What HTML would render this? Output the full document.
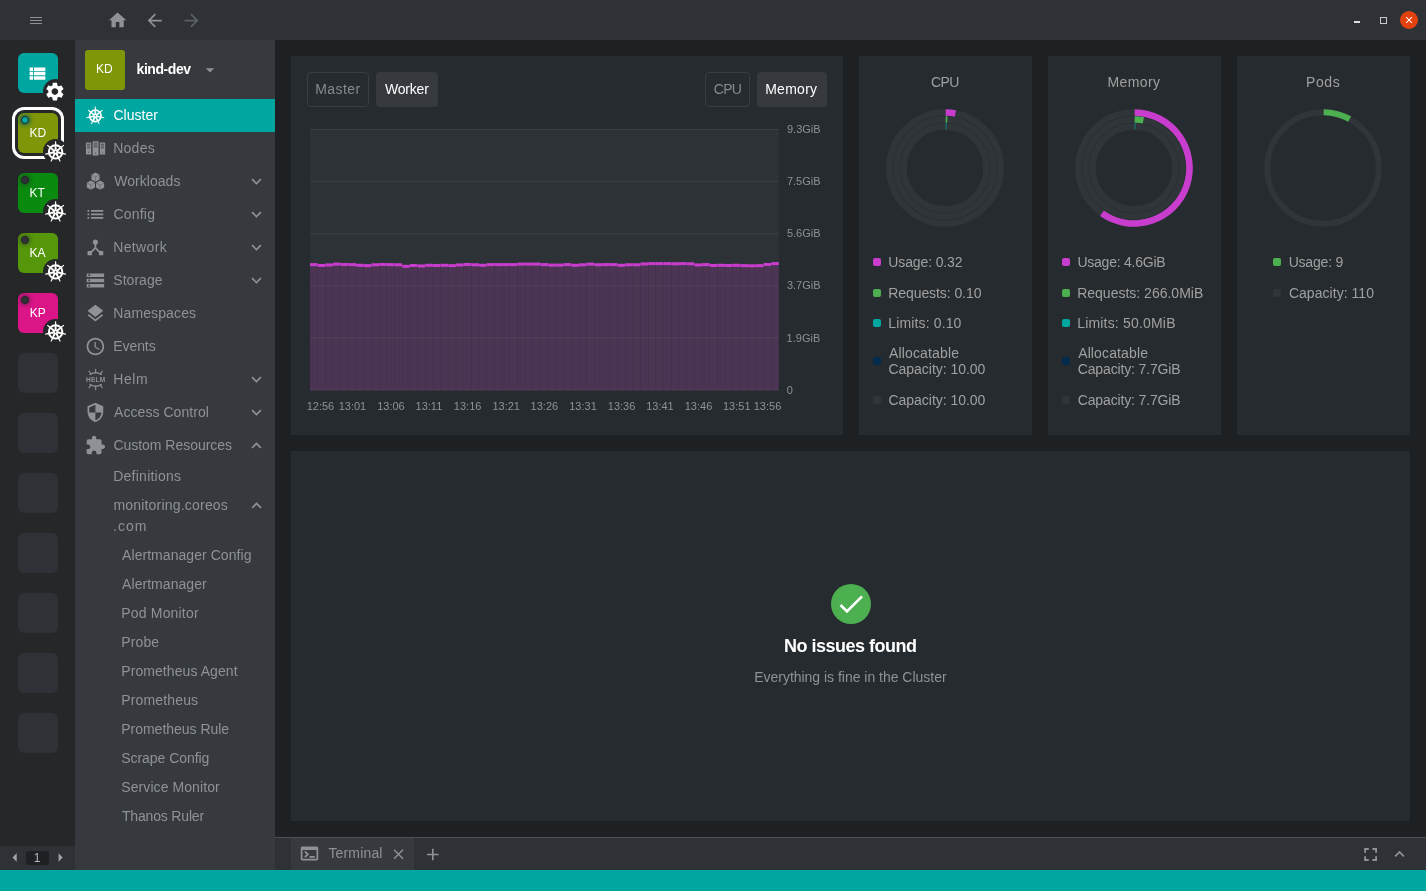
<!DOCTYPE html>
<html lang="en"><head><meta charset="utf-8"><title>Lens</title>
<style>
html,body{margin:0;padding:0;}
body{width:1426px;height:891px;overflow:hidden;background:#1e2124;position:relative;font-family:"Liberation Sans", sans-serif;}
.b{position:absolute;display:block;}
.t{position:absolute;white-space:nowrap;}
#app{position:absolute;left:0;top:0;width:1426px;height:891px;will-change:transform;}
</style></head>
<body>
<div id="app">
<div class="b" style="left:0px;top:0px;width:1426px;height:40px;background:#2e3136;"></div>
<div class="b" style="left:0px;top:40px;width:75px;height:806px;background:#252729;"></div>
<div class="b" style="left:0px;top:846px;width:75px;height:24px;background:#2e3136;"></div>
<div class="b" style="left:75px;top:40px;width:200px;height:830px;background:#36393e;"></div>
<div class="b" style="left:275px;top:40px;width:1151px;height:797px;background:#1e2124;"></div>
<div class="b" style="left:0px;top:870px;width:1426px;height:21px;background:#00a7a0;"></div>
<div class="b" style="left:30px;top:17px;width:12px;height:1px;background:#8e9297;"></div>
<div class="b" style="left:30px;top:20px;width:12px;height:1px;background:#8e9297;"></div>
<div class="b" style="left:30px;top:23px;width:12px;height:1px;background:#8e9297;"></div>
<svg class="b" style="left:107px;top:9px;" width="22" height="22" viewBox="-0.1143 -0.9143 25.1429 25.1429" fill="#8e9297"><path d="M10 20v-6h4v6h5v-8h3L12 3 2 12h3v8z"/></svg>
<svg class="b" style="left:144px;top:10px;" width="22" height="21" viewBox="-0.2286 0.0000 25.1429 24.0000" fill="#8e9297"><path d="M20 11H7.83l5.59-5.59L12 4l-8 8 8 8 1.41-1.41L7.83 13H20v-2z"/></svg>
<svg class="b" style="left:181px;top:10px;" width="21" height="21" viewBox="0.0000 0.0000 24.0000 24.0000" fill="#5b5f64"><path d="M12 4l-1.41 1.41L16.17 11H4v2h12.17l-5.58 5.59L12 20l8-8z"/></svg>
<div class="b" style="left:1354px;top:21.1px;width:6.3px;height:1.8px;background:#e0e0e0;"></div>
<div class="b" style="left:1380px;top:17px;width:7px;height:7px;background:transparent;border:1px solid #c8c8c8;box-sizing:border-box;"></div>
<div class="b" style="left:1400px;top:11px;width:18px;height:18px;background:#e2420f;border-radius:50%;"></div>
<svg class="b" style="left:1403px;top:14px;" width="12" height="12" viewBox="-1.0909 -1.0909 26.1818 26.1818" fill="#ffffff"><path d="M19 6.41L17.59 5 12 10.59 6.41 5 5 6.41 10.59 12 5 17.59 6.41 19 12 13.41 17.59 19 19 17.59 13.41 12z"/></svg>
<div class="b" style="left:18px;top:53px;width:40px;height:40px;background:#00a7a0;border-radius:6px;"></div>
<svg class="b" style="left:27px;top:63px;" width="21" height="22" viewBox="0.0000 -0.1143 24.0000 25.1429" fill="#ffffff"><path d="M3 14h4v-4H3v4zm0 5h4v-4H3v4zM3 9h4V5H3v4zm5 5h13v-4H8v4zm0 5h13v-4H8v4zM8 5v4h13V5H8z"/></svg>
<div class="b" style="left:43.3px;top:79.1px;width:25.2px;height:25.2px;background:#252729;border-radius:50%;"></div>
<svg class="b" style="left:43px;top:80px;" width="23" height="23" viewBox="-0.9818 -0.6545 25.0909 25.0909" fill="#ffffff"><path d="M19.14 12.94c.04-.3.06-.61.06-.94 0-.32-.02-.64-.07-.94l2.03-1.58c.18-.14.23-.41.12-.61l-1.92-3.32c-.12-.22-.37-.29-.59-.22l-2.39.96c-.5-.38-1.03-.7-1.62-.94l-.36-2.54c-.04-.24-.24-.41-.48-.41h-3.84c-.24 0-.43.17-.47.41l-.36 2.54c-.59.24-1.13.57-1.62.94l-2.39-.96c-.22-.08-.47 0-.59.22L2.74 8.87c-.12.21-.08.47.12.61l2.03 1.58c-.05.3-.09.63-.09.94s.02.64.07.94l-2.03 1.58c-.18.14-.23.41-.12.61l1.92 3.32c.12.22.37.29.59.22l2.39-.96c.5.38 1.03.7 1.62.94l.36 2.54c.05.24.24.41.48.41h3.84c.24 0 .44-.17.47-.41l.36-2.54c.59-.24 1.13-.56 1.62-.94l2.39.96c.22.08.47 0 .59-.22l1.92-3.32c.12-.22.07-.47-.12-.61l-2.01-1.58zM12 15.6c-1.98 0-3.6-1.62-3.6-3.6s1.62-3.6 3.6-3.6 3.6 1.62 3.6 3.6-1.62 3.6-3.6 3.6z"/></svg>
<div class="b" style="left:18px;top:113px;width:40px;height:40px;background:#7e9608;border-radius:6px;box-shadow:0 0 0 3px #252729,0 0 0 6px #ffffff;"></div>
<div class="t" style="left:29.55px;top:125.14px;font-size:12px;line-height:16px;color:#ffffff;">KD</div>
<div class="b" style="left:21px;top:116px;width:8px;height:8px;background:#00a7a0;border-radius:50%;box-sizing:border-box;border:1px solid #252729;box-shadow:0 0 5px #252729,0 0 5px #00a7a0;"></div>
<div class="b" style="left:43.3px;top:139.1px;width:25.2px;height:25.2px;background:#252729;border-radius:50%;"></div>
<svg class="b" style="left:43px;top:139px;" width="25" height="25" viewBox="-0.6000 -0.9000 25.0000 25.0000" fill="#ffffff"><circle cx="12" cy="12" r="6.7" fill="none" stroke="#ffffff" stroke-width="2"/><polygon points="13.20,11.50 12.50,1.30 11.50,1.30 10.80,11.50" fill="#ffffff"/><polygon points="13.14,12.63 20.68,5.72 20.05,4.94 11.64,10.75" fill="#ffffff"/><polygon points="12.22,13.28 22.32,14.87 22.54,13.89 12.75,10.94" fill="#ffffff"/><polygon points="11.14,12.97 16.19,21.86 17.09,21.42 13.30,11.93" fill="#ffffff"/><polygon points="10.70,11.93 6.91,21.42 7.81,21.86 12.86,12.97" fill="#ffffff"/><polygon points="11.25,10.94 1.46,13.89 1.68,14.87 11.78,13.28" fill="#ffffff"/><polygon points="12.36,10.75 3.95,4.94 3.32,5.72 10.86,12.63" fill="#ffffff"/><circle cx="12" cy="12" r="2.2" fill="#ffffff"/><circle cx="12" cy="12" r="0.8" fill="#252729"/></svg>
<div class="b" style="left:18px;top:173px;width:40px;height:40px;background:#0b8a10;border-radius:6px;"></div>
<div class="t" style="left:29.62px;top:185.14px;font-size:12px;line-height:16px;color:#ffffff;">KT</div>
<div class="b" style="left:21px;top:176px;width:8px;height:8px;background:#2e3136;border-radius:50%;box-sizing:border-box;border:1px solid #252729;box-shadow:0 0 5px #252729;"></div>
<div class="b" style="left:43.3px;top:199.1px;width:25.2px;height:25.2px;background:#252729;border-radius:50%;"></div>
<svg class="b" style="left:43px;top:199px;" width="25" height="25" viewBox="-0.6000 -0.9000 25.0000 25.0000" fill="#ffffff"><circle cx="12" cy="12" r="6.7" fill="none" stroke="#ffffff" stroke-width="2"/><polygon points="13.20,11.50 12.50,1.30 11.50,1.30 10.80,11.50" fill="#ffffff"/><polygon points="13.14,12.63 20.68,5.72 20.05,4.94 11.64,10.75" fill="#ffffff"/><polygon points="12.22,13.28 22.32,14.87 22.54,13.89 12.75,10.94" fill="#ffffff"/><polygon points="11.14,12.97 16.19,21.86 17.09,21.42 13.30,11.93" fill="#ffffff"/><polygon points="10.70,11.93 6.91,21.42 7.81,21.86 12.86,12.97" fill="#ffffff"/><polygon points="11.25,10.94 1.46,13.89 1.68,14.87 11.78,13.28" fill="#ffffff"/><polygon points="12.36,10.75 3.95,4.94 3.32,5.72 10.86,12.63" fill="#ffffff"/><circle cx="12" cy="12" r="2.2" fill="#ffffff"/><circle cx="12" cy="12" r="0.8" fill="#252729"/></svg>
<div class="b" style="left:18px;top:233px;width:40px;height:40px;background:#56960b;border-radius:6px;"></div>
<div class="t" style="left:29.51px;top:245.14px;font-size:12px;line-height:16px;color:#ffffff;">KA</div>
<div class="b" style="left:21px;top:236px;width:8px;height:8px;background:#2e3136;border-radius:50%;box-sizing:border-box;border:1px solid #252729;box-shadow:0 0 5px #252729;"></div>
<div class="b" style="left:43.3px;top:259.1px;width:25.2px;height:25.2px;background:#252729;border-radius:50%;"></div>
<svg class="b" style="left:43px;top:259px;" width="25" height="25" viewBox="-0.6000 -0.9000 25.0000 25.0000" fill="#ffffff"><circle cx="12" cy="12" r="6.7" fill="none" stroke="#ffffff" stroke-width="2"/><polygon points="13.20,11.50 12.50,1.30 11.50,1.30 10.80,11.50" fill="#ffffff"/><polygon points="13.14,12.63 20.68,5.72 20.05,4.94 11.64,10.75" fill="#ffffff"/><polygon points="12.22,13.28 22.32,14.87 22.54,13.89 12.75,10.94" fill="#ffffff"/><polygon points="11.14,12.97 16.19,21.86 17.09,21.42 13.30,11.93" fill="#ffffff"/><polygon points="10.70,11.93 6.91,21.42 7.81,21.86 12.86,12.97" fill="#ffffff"/><polygon points="11.25,10.94 1.46,13.89 1.68,14.87 11.78,13.28" fill="#ffffff"/><polygon points="12.36,10.75 3.95,4.94 3.32,5.72 10.86,12.63" fill="#ffffff"/><circle cx="12" cy="12" r="2.2" fill="#ffffff"/><circle cx="12" cy="12" r="0.8" fill="#252729"/></svg>
<div class="b" style="left:18px;top:293px;width:40px;height:40px;background:#db1488;border-radius:6px;"></div>
<div class="t" style="left:29.84px;top:305.14px;font-size:12px;line-height:16px;color:#ffffff;">KP</div>
<div class="b" style="left:21px;top:296px;width:8px;height:8px;background:#2e3136;border-radius:50%;box-sizing:border-box;border:1px solid #252729;box-shadow:0 0 5px #252729;"></div>
<div class="b" style="left:43.3px;top:319.1px;width:25.2px;height:25.2px;background:#252729;border-radius:50%;"></div>
<svg class="b" style="left:43px;top:319px;" width="25" height="25" viewBox="-0.6000 -0.9000 25.0000 25.0000" fill="#ffffff"><circle cx="12" cy="12" r="6.7" fill="none" stroke="#ffffff" stroke-width="2"/><polygon points="13.20,11.50 12.50,1.30 11.50,1.30 10.80,11.50" fill="#ffffff"/><polygon points="13.14,12.63 20.68,5.72 20.05,4.94 11.64,10.75" fill="#ffffff"/><polygon points="12.22,13.28 22.32,14.87 22.54,13.89 12.75,10.94" fill="#ffffff"/><polygon points="11.14,12.97 16.19,21.86 17.09,21.42 13.30,11.93" fill="#ffffff"/><polygon points="10.70,11.93 6.91,21.42 7.81,21.86 12.86,12.97" fill="#ffffff"/><polygon points="11.25,10.94 1.46,13.89 1.68,14.87 11.78,13.28" fill="#ffffff"/><polygon points="12.36,10.75 3.95,4.94 3.32,5.72 10.86,12.63" fill="#ffffff"/><circle cx="12" cy="12" r="2.2" fill="#ffffff"/><circle cx="12" cy="12" r="0.8" fill="#252729"/></svg>
<div class="b" style="left:18px;top:353px;width:40px;height:40px;background:#2e3136;border-radius:6px;"></div>
<div class="b" style="left:18px;top:413px;width:40px;height:40px;background:#2e3136;border-radius:6px;"></div>
<div class="b" style="left:18px;top:473px;width:40px;height:40px;background:#2e3136;border-radius:6px;"></div>
<div class="b" style="left:18px;top:533px;width:40px;height:40px;background:#2e3136;border-radius:6px;"></div>
<div class="b" style="left:18px;top:593px;width:40px;height:40px;background:#2e3136;border-radius:6px;"></div>
<div class="b" style="left:18px;top:653px;width:40px;height:40px;background:#2e3136;border-radius:6px;"></div>
<div class="b" style="left:18px;top:713px;width:40px;height:40px;background:#2e3136;border-radius:6px;"></div>
<svg class="b" style="left:5px;top:847px;" width="20" height="21" viewBox="0.0000 -0.6000 24.0000 25.2000" fill="#a0a3a7"><path d="M14 7l-5 5 5 5V7z"/></svg>
<svg class="b" style="left:50px;top:847px;" width="21" height="21" viewBox="-0.2400 -0.6000 25.2000 25.2000" fill="#a0a3a7"><path d="M10 17l5-5-5-5v10z"/></svg>
<div class="b" style="left:26px;top:851px;width:23px;height:14px;background:#1e2124;border-radius:3px;"></div>
<div class="t" style="left:33.74px;top:849.64px;font-size:12px;line-height:16px;color:#b4b7bb;">1</div>
<div class="b" style="left:85px;top:50px;width:40px;height:40px;background:#7e9608;border-radius:3px;"></div>
<div class="t" style="left:96.05px;top:61.14px;font-size:12px;line-height:16px;color:#ffffff;">KD</div>
<div class="t" style="left:136.55px;top:60.35px;font-size:14px;line-height:18px;color:#ffffff;font-weight:bold;letter-spacing:-0.428px;">kind-dev</div>
<svg class="b" style="left:200px;top:60px;" width="20" height="20" viewBox="0.0000 0.0000 24.0000 24.0000" fill="#8e9297"><path d="M7 10l5 5 5-5z"/></svg>
<div class="b" style="left:75px;top:99px;width:200px;height:33px;background:#00a7a0;"></div>
<div class="t" style="left:113.48px;top:106.45px;font-size:14px;line-height:18px;color:#ffffff;letter-spacing:0.030px;">Cluster</div>
<svg class="b" style="left:85px;top:105px;" width="21" height="22" viewBox="0.0000 -0.5825 24.4660 25.6311" fill="#ffffff"><circle cx="12" cy="12" r="6.7" fill="none" stroke="#ffffff" stroke-width="2"/><polygon points="13.20,11.50 12.50,1.30 11.50,1.30 10.80,11.50" fill="#ffffff"/><polygon points="13.14,12.63 20.68,5.72 20.05,4.94 11.64,10.75" fill="#ffffff"/><polygon points="12.22,13.28 22.32,14.87 22.54,13.89 12.75,10.94" fill="#ffffff"/><polygon points="11.14,12.97 16.19,21.86 17.09,21.42 13.30,11.93" fill="#ffffff"/><polygon points="10.70,11.93 6.91,21.42 7.81,21.86 12.86,12.97" fill="#ffffff"/><polygon points="11.25,10.94 1.46,13.89 1.68,14.87 11.78,13.28" fill="#ffffff"/><polygon points="12.36,10.75 3.95,4.94 3.32,5.72 10.86,12.63" fill="#ffffff"/><circle cx="12" cy="12" r="2.2" fill="#ffffff"/><circle cx="12" cy="12" r="0.8" fill="#00a7a0"/></svg>
<div class="t" style="left:113.26px;top:139.45px;font-size:14px;line-height:18px;color:#8e9297;letter-spacing:0.236px;">Nodes</div>
<svg class="b" style="left:84px;top:137px;" width="23" height="23" viewBox="-0.7222 -0.7778 25.5556 25.5556" fill="#8e9297"><rect x="1.4" y="5.2" width="5.9" height="13.6" rx="0.6" fill="#8e9297"/><rect x="2.5999999999999996" y="6.800000000000001" width="3.5000000000000004" height="0.9" fill="#36393e"/><rect x="2.5999999999999996" y="8.9" width="3.5000000000000004" height="0.9" fill="#36393e"/><rect x="2.5999999999999996" y="11.0" width="3.5000000000000004" height="0.9" fill="#36393e"/><rect x="3.8499999999999996" y="15.600000000000001" width="1" height="1" fill="#36393e"/><rect x="8.85" y="3.95" width="6.6" height="15.85" rx="0.6" fill="#8e9297"/><rect x="10.049999999999999" y="5.550000000000001" width="4.199999999999999" height="0.9" fill="#36393e"/><rect x="10.049999999999999" y="7.65" width="4.199999999999999" height="0.9" fill="#36393e"/><rect x="10.049999999999999" y="9.75" width="4.199999999999999" height="0.9" fill="#36393e"/><rect x="11.649999999999999" y="16.6" width="1" height="1" fill="#36393e"/><rect x="16.9" y="5.2" width="5.9" height="13.6" rx="0.6" fill="#8e9297"/><rect x="18.099999999999998" y="6.800000000000001" width="3.5000000000000004" height="0.9" fill="#36393e"/><rect x="18.099999999999998" y="8.9" width="3.5000000000000004" height="0.9" fill="#36393e"/><rect x="18.099999999999998" y="11.0" width="3.5000000000000004" height="0.9" fill="#36393e"/><rect x="19.349999999999998" y="15.600000000000001" width="1" height="1" fill="#36393e"/></svg>
<div class="t" style="left:114.19px;top:172.45px;font-size:14px;line-height:18px;color:#8e9297;letter-spacing:0.043px;">Workloads</div>
<svg class="b" style="left:84px;top:170px;" width="23" height="23" viewBox="-0.7778 -0.5556 25.5556 25.5556" fill="#8e9297"><polygon points="12.00,2.10 16.50,4.70 16.50,9.90 12.00,12.50 7.50,9.90 7.50,4.70" fill="#8e9297"/><path d="M7.50 4.70L12.00 7.30L16.50 4.70M12.00 7.30V12.50" stroke="#36393e" stroke-width="0.7" fill="none" opacity="0.55"/><polygon points="6.90,11.00 11.40,13.60 11.40,18.80 6.90,21.40 2.40,18.80 2.40,13.60" fill="#8e9297"/><path d="M2.40 13.60L6.90 16.20L11.40 13.60M6.90 16.20V21.40" stroke="#36393e" stroke-width="0.7" fill="none" opacity="0.55"/><polygon points="17.10,11.00 21.60,13.60 21.60,18.80 17.10,21.40 12.60,18.80 12.60,13.60" fill="#8e9297"/><path d="M12.60 13.60L17.10 16.20L21.60 13.60M17.10 16.20V21.40" stroke="#36393e" stroke-width="0.7" fill="none" opacity="0.55"/></svg>
<svg class="b" style="left:246px;top:171px;" width="21" height="21" viewBox="-0.5400 -0.5400 25.2000 25.2000" fill="#8e9297"><path d="M7.41 8.59L12 13.17l4.59-4.58L18 10l-6 6-6-6 1.41-1.41z"/></svg>
<div class="t" style="left:113.48px;top:205.45px;font-size:14px;line-height:18px;color:#8e9297;letter-spacing:0.200px;">Config</div>
<svg class="b" style="left:84px;top:203px;" width="22" height="22" viewBox="-1.0286 -1.0857 25.1429 25.1429" fill="#8e9297"><path d="M3 13h2v-2H3v2zm0 4h2v-2H3v2zm0-8h2V7H3v2zm4 4h14v-2H7v2zm0 4h14v-2H7v2zM7 7v2h14V7H7z"/></svg>
<svg class="b" style="left:246px;top:204px;" width="21" height="21" viewBox="-0.5400 -0.5400 25.2000 25.2000" fill="#8e9297"><path d="M7.41 8.59L12 13.17l4.59-4.58L18 10l-6 6-6-6 1.41-1.41z"/></svg>
<div class="t" style="left:113.26px;top:238.45px;font-size:14px;line-height:18px;color:#8e9297;letter-spacing:0.343px;">Network</div>
<svg class="b" style="left:84px;top:236px;" width="22" height="22" viewBox="-1.0286 -1.0857 25.1429 25.1429" fill="#8e9297"><path d="M17 16l-4-4V8.82C14.16 8.4 15 7.3 15 6c0-1.66-1.34-3-3-3S9 4.34 9 6c0 1.3.84 2.4 2 2.82V12l-4 4H3v5h5v-3.05l4-4.2 4 4.2V21h5v-5h-4z"/></svg>
<svg class="b" style="left:246px;top:237px;" width="21" height="21" viewBox="-0.5400 -0.5400 25.2000 25.2000" fill="#8e9297"><path d="M7.41 8.59L12 13.17l4.59-4.58L18 10l-6 6-6-6 1.41-1.41z"/></svg>
<div class="t" style="left:113.31px;top:271.45px;font-size:14px;line-height:18px;color:#8e9297;letter-spacing:0.033px;">Storage</div>
<svg class="b" style="left:84px;top:269px;" width="22" height="22" viewBox="-1.0286 -1.0857 25.1429 25.1429" fill="#8e9297"><path d="M2 20h20v-4H2v4zm2-3h2v2H4v-2zM2 4v4h20V4H2zm4 3H4V5h2v2zm-4 7h20v-4H2v4zm2-3h2v2H4v-2z"/></svg>
<svg class="b" style="left:246px;top:270px;" width="21" height="21" viewBox="-0.5400 -0.5400 25.2000 25.2000" fill="#8e9297"><path d="M7.41 8.59L12 13.17l4.59-4.58L18 10l-6 6-6-6 1.41-1.41z"/></svg>
<div class="t" style="left:113.26px;top:304.45px;font-size:14px;line-height:18px;color:#8e9297;letter-spacing:0.120px;">Namespaces</div>
<svg class="b" style="left:84px;top:302px;" width="22" height="22" viewBox="-1.0286 -1.0857 25.1429 25.1429" fill="#8e9297"><path d="M11.99 18.54l-7.37-5.73L3 14.07l9 7 9-7-1.63-1.27-7.38 5.74zM12 16l7.36-5.73L21 9l-9-7-9 7 1.63 1.27L12 16z"/></svg>
<div class="t" style="left:113.26px;top:337.45px;font-size:14px;line-height:18px;color:#8e9297;letter-spacing:-0.078px;">Events</div>
<svg class="b" style="left:84px;top:335px;" width="22" height="22" viewBox="-1.0286 -1.0857 25.1429 25.1429" fill="#8e9297"><path d="M11.99 2C6.47 2 2 6.48 2 12s4.47 10 9.99 10C17.52 22 22 17.52 22 12S17.52 2 11.99 2zM12 20c-4.42 0-8-3.58-8-8s3.58-8 8-8 8 3.58 8 8-3.58 8-8 8zm.5-13H11v6l5.25 3.15.75-1.23-4.5-2.67z"/></svg>
<div class="t" style="left:113.26px;top:370.45px;font-size:14px;line-height:18px;color:#8e9297;letter-spacing:0.609px;">Helm</div>
<svg class="b" style="left:83px;top:367px;" width="25" height="25" viewBox="-12.6500 -12.4500 25.0000 25.0000" fill="#8e9297"><path d="M-5.7 -5.0Q0 -8.5 5.7 -5.0" fill="none" stroke="#8e9297" stroke-width="1.15" stroke-linecap="round"/><path d="M0 -10.2V-6.6M-6.6 -8.3L-4.7 -5.4M6.6 -8.3L4.7 -5.4" fill="none" stroke="#8e9297" stroke-width="1.15" stroke-linecap="round"/><path d="M-5.7 5.0Q0 8.5 5.7 5.0" fill="none" stroke="#8e9297" stroke-width="1.15" stroke-linecap="round"/><path d="M0 10.2V6.6M-6.6 8.3L-4.7 5.4M6.6 8.3L4.7 5.4" fill="none" stroke="#8e9297" stroke-width="1.15" stroke-linecap="round"/><text x="0" y="2.35" text-anchor="middle" font-family="Liberation Sans, sans-serif" font-weight="bold" font-size="6.5" textLength="19.2" lengthAdjust="spacing" fill="#8e9297">HELM</text></svg>
<svg class="b" style="left:246px;top:369px;" width="21" height="21" viewBox="-0.5400 -0.5400 25.2000 25.2000" fill="#8e9297"><path d="M7.41 8.59L12 13.17l4.59-4.58L18 10l-6 6-6-6 1.41-1.41z"/></svg>
<div class="t" style="left:114.08px;top:403.45px;font-size:14px;line-height:18px;color:#8e9297;letter-spacing:0.052px;">Access Control</div>
<svg class="b" style="left:84px;top:401px;" width="22" height="22" viewBox="-1.0286 -1.0857 25.1429 25.1429" fill="#8e9297"><path d="M12 1L3 5v6c0 5.55 3.84 10.74 9 12 5.16-1.26 9-6.45 9-12V5l-9-4zm0 10.99h7c-.53 4.12-3.28 7.79-7 8.94V12H5V6.3l7-3.11v8.8z"/></svg>
<svg class="b" style="left:246px;top:402px;" width="21" height="21" viewBox="-0.5400 -0.5400 25.2000 25.2000" fill="#8e9297"><path d="M7.41 8.59L12 13.17l4.59-4.58L18 10l-6 6-6-6 1.41-1.41z"/></svg>
<div class="t" style="left:113.48px;top:436.45px;font-size:14px;line-height:18px;color:#8e9297;letter-spacing:-0.034px;">Custom Resources</div>
<svg class="b" style="left:84px;top:434px;" width="22" height="22" viewBox="-1.0286 -1.0857 25.1429 25.1429" fill="#8e9297"><path d="M20.5 11H19V7c0-1.1-.9-2-2-2h-4V3.5C13 2.12 11.88 1 10.5 1S8 2.12 8 3.5V5H4c-1.1 0-1.99.9-1.99 2v3.8H3.5c1.49 0 2.7 1.21 2.7 2.7s-1.21 2.7-2.7 2.7H2V20c0 1.1.9 2 2 2h3.8v-1.5c0-1.49 1.21-2.7 2.7-2.7 1.49 0 2.7 1.21 2.7 2.7V22H17c1.1 0 2-.9 2-2v-4h1.5c1.38 0 2.5-1.12 2.5-2.5S21.88 11 20.5 11z"/></svg>
<svg class="b" style="left:246px;top:435px;" width="21" height="21" viewBox="-0.5400 -0.7800 25.2000 25.2000" fill="#8e9297"><path d="M7.41 15.41L12 10.83l4.59 4.58L18 14l-6-6-6 6z"/></svg>
<div class="t" style="left:113.26px;top:467.15px;font-size:14px;line-height:18px;color:#8e9297;letter-spacing:0.239px;">Definitions</div>
<div class="t" style="left:113.38px;top:496.05px;font-size:14px;line-height:18px;color:#8e9297;letter-spacing:0.200px;">monitoring.coreos</div>
<div class="t" style="left:112.99px;top:516.95px;font-size:14px;line-height:18px;color:#8e9297;letter-spacing:1.039px;">.com</div>
<svg class="b" style="left:246px;top:495px;" width="21" height="21" viewBox="-0.7200 -0.7200 25.2000 25.2000" fill="#8e9297"><path d="M7.41 15.41L12 10.83l4.59 4.58L18 14l-6-6-6 6z"/></svg>
<div class="t" style="left:122.08px;top:546.15px;font-size:14px;line-height:18px;color:#8e9297;letter-spacing:0.052px;">Alertmanager Config</div>
<div class="t" style="left:122.08px;top:575.15px;font-size:14px;line-height:18px;color:#8e9297;letter-spacing:0.050px;">Alertmanager</div>
<div class="t" style="left:121.26px;top:604.15px;font-size:14px;line-height:18px;color:#8e9297;letter-spacing:0.185px;">Pod Monitor</div>
<div class="t" style="left:121.26px;top:633.15px;font-size:14px;line-height:18px;color:#8e9297;letter-spacing:0.118px;">Probe</div>
<div class="t" style="left:121.26px;top:662.15px;font-size:14px;line-height:18px;color:#8e9297;letter-spacing:0.077px;">Prometheus Agent</div>
<div class="t" style="left:121.26px;top:691.15px;font-size:14px;line-height:18px;color:#8e9297;letter-spacing:0.148px;">Prometheus</div>
<div class="t" style="left:121.26px;top:720.15px;font-size:14px;line-height:18px;color:#8e9297;letter-spacing:-0.020px;">Prometheus Rule</div>
<div class="t" style="left:121.31px;top:749.15px;font-size:14px;line-height:18px;color:#8e9297;letter-spacing:-0.058px;">Scrape Config</div>
<div class="t" style="left:121.31px;top:778.15px;font-size:14px;line-height:18px;color:#8e9297;letter-spacing:0.079px;">Service Monitor</div>
<div class="t" style="left:121.95px;top:807.15px;font-size:14px;line-height:18px;color:#8e9297;letter-spacing:-0.167px;">Thanos Ruler</div>
<div class="b" style="left:291px;top:56px;width:552px;height:379px;background:#262b2f;"></div>
<div class="b" style="left:859px;top:56px;width:173px;height:379px;background:#262b2f;"></div>
<div class="b" style="left:1048px;top:56px;width:173px;height:379px;background:#262b2f;"></div>
<div class="b" style="left:1237px;top:56px;width:173px;height:379px;background:#262b2f;"></div>
<div class="b" style="left:291px;top:451px;width:1119px;height:370px;background:#262b2f;"></div>
<div class="b" style="left:307px;top:72px;width:62px;height:35px;background:transparent;border-radius:4px;border:1px solid #3a3d42;box-sizing:border-box;"></div>
<div class="t" style="left:315.30px;top:80.45px;font-size:14px;line-height:18px;color:#87898d;letter-spacing:0.400px;">Master</div>
<div class="b" style="left:376px;top:72px;width:62px;height:35px;background:#36393e;border-radius:4px;"></div>
<div class="t" style="left:384.96px;top:80.45px;font-size:14px;line-height:18px;color:#ffffff;letter-spacing:-0.194px;">Worker</div>
<div class="b" style="left:705px;top:72px;width:45px;height:35px;background:transparent;border-radius:4px;border:1px solid #3a3d42;box-sizing:border-box;"></div>
<div class="t" style="left:713.77px;top:80.45px;font-size:14px;line-height:18px;color:#87898d;letter-spacing:-0.727px;">CPU</div>
<div class="b" style="left:757px;top:72px;width:70px;height:35px;background:#36393e;border-radius:4px;"></div>
<div class="t" style="left:765.20px;top:80.45px;font-size:14px;line-height:18px;color:#ffffff;letter-spacing:0.273px;">Memory</div>
<svg class="b" style="left:310px;top:128px" width="469" height="263.4" viewBox="310 128 469 263.4"><rect x="310" y="129" width="469" height="261.4" fill="#2d3236"/><rect x="310.00" y="263.13" width="7.52" height="127.27" fill="#c93dce" fill-opacity="0.2"/><rect x="310.00" y="263.13" width="7.52" height="3" fill="#c93dce"/><rect x="317.69" y="263.97" width="7.52" height="126.43" fill="#c93dce" fill-opacity="0.2"/><rect x="317.69" y="263.97" width="7.52" height="3" fill="#c93dce"/><rect x="325.38" y="263.47" width="7.52" height="126.93" fill="#c93dce" fill-opacity="0.2"/><rect x="325.38" y="263.47" width="7.52" height="3" fill="#c93dce"/><rect x="333.07" y="262.63" width="7.52" height="127.77" fill="#c93dce" fill-opacity="0.2"/><rect x="333.07" y="262.63" width="7.52" height="3" fill="#c93dce"/><rect x="340.75" y="262.96" width="7.52" height="127.44" fill="#c93dce" fill-opacity="0.2"/><rect x="340.75" y="262.96" width="7.52" height="3" fill="#c93dce"/><rect x="348.44" y="263.13" width="7.52" height="127.27" fill="#c93dce" fill-opacity="0.2"/><rect x="348.44" y="263.13" width="7.52" height="3" fill="#c93dce"/><rect x="356.13" y="263.80" width="7.52" height="126.60" fill="#c93dce" fill-opacity="0.2"/><rect x="356.13" y="263.80" width="7.52" height="3" fill="#c93dce"/><rect x="363.82" y="264.14" width="7.52" height="126.26" fill="#c93dce" fill-opacity="0.2"/><rect x="363.82" y="264.14" width="7.52" height="3" fill="#c93dce"/><rect x="371.51" y="263.30" width="7.52" height="127.10" fill="#c93dce" fill-opacity="0.2"/><rect x="371.51" y="263.30" width="7.52" height="3" fill="#c93dce"/><rect x="379.20" y="262.96" width="7.52" height="127.44" fill="#c93dce" fill-opacity="0.2"/><rect x="379.20" y="262.96" width="7.52" height="3" fill="#c93dce"/><rect x="386.89" y="263.13" width="7.52" height="127.27" fill="#c93dce" fill-opacity="0.2"/><rect x="386.89" y="263.13" width="7.52" height="3" fill="#c93dce"/><rect x="394.57" y="263.30" width="7.52" height="127.10" fill="#c93dce" fill-opacity="0.2"/><rect x="394.57" y="263.30" width="7.52" height="3" fill="#c93dce"/><rect x="402.26" y="264.81" width="7.52" height="125.59" fill="#c93dce" fill-opacity="0.2"/><rect x="402.26" y="264.81" width="7.52" height="3" fill="#c93dce"/><rect x="409.95" y="263.97" width="7.52" height="126.43" fill="#c93dce" fill-opacity="0.2"/><rect x="409.95" y="263.97" width="7.52" height="3" fill="#c93dce"/><rect x="417.64" y="264.48" width="7.52" height="125.92" fill="#c93dce" fill-opacity="0.2"/><rect x="417.64" y="264.48" width="7.52" height="3" fill="#c93dce"/><rect x="425.33" y="263.80" width="7.52" height="126.60" fill="#c93dce" fill-opacity="0.2"/><rect x="425.33" y="263.80" width="7.52" height="3" fill="#c93dce"/><rect x="433.02" y="263.97" width="7.52" height="126.43" fill="#c93dce" fill-opacity="0.2"/><rect x="433.02" y="263.97" width="7.52" height="3" fill="#c93dce"/><rect x="440.70" y="263.80" width="7.52" height="126.60" fill="#c93dce" fill-opacity="0.2"/><rect x="440.70" y="263.80" width="7.52" height="3" fill="#c93dce"/><rect x="448.39" y="264.14" width="7.52" height="126.26" fill="#c93dce" fill-opacity="0.2"/><rect x="448.39" y="264.14" width="7.52" height="3" fill="#c93dce"/><rect x="456.08" y="263.47" width="7.52" height="126.93" fill="#c93dce" fill-opacity="0.2"/><rect x="456.08" y="263.47" width="7.52" height="3" fill="#c93dce"/><rect x="463.77" y="262.96" width="7.52" height="127.44" fill="#c93dce" fill-opacity="0.2"/><rect x="463.77" y="262.96" width="7.52" height="3" fill="#c93dce"/><rect x="471.46" y="263.30" width="7.52" height="127.10" fill="#c93dce" fill-opacity="0.2"/><rect x="471.46" y="263.30" width="7.52" height="3" fill="#c93dce"/><rect x="479.15" y="263.80" width="7.52" height="126.60" fill="#c93dce" fill-opacity="0.2"/><rect x="479.15" y="263.80" width="7.52" height="3" fill="#c93dce"/><rect x="486.84" y="263.13" width="7.52" height="127.27" fill="#c93dce" fill-opacity="0.2"/><rect x="486.84" y="263.13" width="7.52" height="3" fill="#c93dce"/><rect x="494.52" y="263.13" width="7.52" height="127.27" fill="#c93dce" fill-opacity="0.2"/><rect x="494.52" y="263.13" width="7.52" height="3" fill="#c93dce"/><rect x="502.21" y="263.13" width="7.52" height="127.27" fill="#c93dce" fill-opacity="0.2"/><rect x="502.21" y="263.13" width="7.52" height="3" fill="#c93dce"/><rect x="509.90" y="263.13" width="7.52" height="127.27" fill="#c93dce" fill-opacity="0.2"/><rect x="509.90" y="263.13" width="7.52" height="3" fill="#c93dce"/><rect x="517.59" y="262.63" width="7.52" height="127.77" fill="#c93dce" fill-opacity="0.2"/><rect x="517.59" y="262.63" width="7.52" height="3" fill="#c93dce"/><rect x="525.28" y="262.63" width="7.52" height="127.77" fill="#c93dce" fill-opacity="0.2"/><rect x="525.28" y="262.63" width="7.52" height="3" fill="#c93dce"/><rect x="532.97" y="262.63" width="7.52" height="127.77" fill="#c93dce" fill-opacity="0.2"/><rect x="532.97" y="262.63" width="7.52" height="3" fill="#c93dce"/><rect x="540.66" y="263.13" width="7.52" height="127.27" fill="#c93dce" fill-opacity="0.2"/><rect x="540.66" y="263.13" width="7.52" height="3" fill="#c93dce"/><rect x="548.34" y="263.64" width="7.52" height="126.76" fill="#c93dce" fill-opacity="0.2"/><rect x="548.34" y="263.64" width="7.52" height="3" fill="#c93dce"/><rect x="556.03" y="263.64" width="7.52" height="126.76" fill="#c93dce" fill-opacity="0.2"/><rect x="556.03" y="263.64" width="7.52" height="3" fill="#c93dce"/><rect x="563.72" y="263.13" width="7.52" height="127.27" fill="#c93dce" fill-opacity="0.2"/><rect x="563.72" y="263.13" width="7.52" height="3" fill="#c93dce"/><rect x="571.41" y="263.80" width="7.52" height="126.60" fill="#c93dce" fill-opacity="0.2"/><rect x="571.41" y="263.80" width="7.52" height="3" fill="#c93dce"/><rect x="579.10" y="263.30" width="7.52" height="127.10" fill="#c93dce" fill-opacity="0.2"/><rect x="579.10" y="263.30" width="7.52" height="3" fill="#c93dce"/><rect x="586.79" y="262.63" width="7.52" height="127.77" fill="#c93dce" fill-opacity="0.2"/><rect x="586.79" y="262.63" width="7.52" height="3" fill="#c93dce"/><rect x="594.48" y="263.30" width="7.52" height="127.10" fill="#c93dce" fill-opacity="0.2"/><rect x="594.48" y="263.30" width="7.52" height="3" fill="#c93dce"/><rect x="602.16" y="263.13" width="7.52" height="127.27" fill="#c93dce" fill-opacity="0.2"/><rect x="602.16" y="263.13" width="7.52" height="3" fill="#c93dce"/><rect x="609.85" y="263.13" width="7.52" height="127.27" fill="#c93dce" fill-opacity="0.2"/><rect x="609.85" y="263.13" width="7.52" height="3" fill="#c93dce"/><rect x="617.54" y="263.80" width="7.52" height="126.60" fill="#c93dce" fill-opacity="0.2"/><rect x="617.54" y="263.80" width="7.52" height="3" fill="#c93dce"/><rect x="625.23" y="263.30" width="7.52" height="127.10" fill="#c93dce" fill-opacity="0.2"/><rect x="625.23" y="263.30" width="7.52" height="3" fill="#c93dce"/><rect x="632.92" y="263.30" width="7.52" height="127.10" fill="#c93dce" fill-opacity="0.2"/><rect x="632.92" y="263.30" width="7.52" height="3" fill="#c93dce"/><rect x="640.61" y="262.46" width="7.52" height="127.94" fill="#c93dce" fill-opacity="0.2"/><rect x="640.61" y="262.46" width="7.52" height="3" fill="#c93dce"/><rect x="648.30" y="262.12" width="7.52" height="128.28" fill="#c93dce" fill-opacity="0.2"/><rect x="648.30" y="262.12" width="7.52" height="3" fill="#c93dce"/><rect x="655.98" y="262.12" width="7.52" height="128.28" fill="#c93dce" fill-opacity="0.2"/><rect x="655.98" y="262.12" width="7.52" height="3" fill="#c93dce"/><rect x="663.67" y="262.12" width="7.52" height="128.28" fill="#c93dce" fill-opacity="0.2"/><rect x="663.67" y="262.12" width="7.52" height="3" fill="#c93dce"/><rect x="671.36" y="262.29" width="7.52" height="128.11" fill="#c93dce" fill-opacity="0.2"/><rect x="671.36" y="262.29" width="7.52" height="3" fill="#c93dce"/><rect x="679.05" y="262.12" width="7.52" height="128.28" fill="#c93dce" fill-opacity="0.2"/><rect x="679.05" y="262.12" width="7.52" height="3" fill="#c93dce"/><rect x="686.74" y="262.29" width="7.52" height="128.11" fill="#c93dce" fill-opacity="0.2"/><rect x="686.74" y="262.29" width="7.52" height="3" fill="#c93dce"/><rect x="694.43" y="263.47" width="7.52" height="126.93" fill="#c93dce" fill-opacity="0.2"/><rect x="694.43" y="263.47" width="7.52" height="3" fill="#c93dce"/><rect x="702.11" y="263.13" width="7.52" height="127.27" fill="#c93dce" fill-opacity="0.2"/><rect x="702.11" y="263.13" width="7.52" height="3" fill="#c93dce"/><rect x="709.80" y="263.97" width="7.52" height="126.43" fill="#c93dce" fill-opacity="0.2"/><rect x="709.80" y="263.97" width="7.52" height="3" fill="#c93dce"/><rect x="717.49" y="263.80" width="7.52" height="126.60" fill="#c93dce" fill-opacity="0.2"/><rect x="717.49" y="263.80" width="7.52" height="3" fill="#c93dce"/><rect x="725.18" y="263.97" width="7.52" height="126.43" fill="#c93dce" fill-opacity="0.2"/><rect x="725.18" y="263.97" width="7.52" height="3" fill="#c93dce"/><rect x="732.87" y="263.80" width="7.52" height="126.60" fill="#c93dce" fill-opacity="0.2"/><rect x="732.87" y="263.80" width="7.52" height="3" fill="#c93dce"/><rect x="740.56" y="264.14" width="7.52" height="126.26" fill="#c93dce" fill-opacity="0.2"/><rect x="740.56" y="264.14" width="7.52" height="3" fill="#c93dce"/><rect x="748.25" y="264.31" width="7.52" height="126.09" fill="#c93dce" fill-opacity="0.2"/><rect x="748.25" y="264.31" width="7.52" height="3" fill="#c93dce"/><rect x="755.93" y="264.14" width="7.52" height="126.26" fill="#c93dce" fill-opacity="0.2"/><rect x="755.93" y="264.14" width="7.52" height="3" fill="#c93dce"/><rect x="763.62" y="262.96" width="7.52" height="127.44" fill="#c93dce" fill-opacity="0.2"/><rect x="763.62" y="262.96" width="7.52" height="3" fill="#c93dce"/><rect x="771.31" y="262.12" width="7.52" height="128.28" fill="#c93dce" fill-opacity="0.2"/><rect x="771.31" y="262.12" width="7.52" height="3" fill="#c93dce"/><rect x="310" y="129.00" width="469" height="1" fill="#ffffff" fill-opacity="0.065"/><rect x="310" y="181.10" width="469" height="1" fill="#ffffff" fill-opacity="0.065"/><rect x="310" y="233.20" width="469" height="1" fill="#ffffff" fill-opacity="0.065"/><rect x="310" y="285.30" width="469" height="1" fill="#ffffff" fill-opacity="0.065"/><rect x="310" y="337.40" width="469" height="1" fill="#ffffff" fill-opacity="0.065"/><rect x="310" y="389.50" width="469" height="1" fill="#ffffff" fill-opacity="0.065"/></svg>
<div class="t" style="left:787.00px;top:122.19px;font-size:11px;line-height:14px;color:#8e9297;">9.3GiB</div>
<div class="t" style="left:786.91px;top:174.29px;font-size:11px;line-height:14px;color:#8e9297;">7.5GiB</div>
<div class="t" style="left:786.94px;top:226.39px;font-size:11px;line-height:14px;color:#8e9297;">5.6GiB</div>
<div class="t" style="left:786.95px;top:278.49px;font-size:11px;line-height:14px;color:#8e9297;">3.7GiB</div>
<div class="t" style="left:786.60px;top:330.59px;font-size:11px;line-height:14px;color:#8e9297;">1.9GiB</div>
<div class="t" style="left:786.64px;top:382.69px;font-size:11px;line-height:14px;color:#8e9297;">0</div>
<div class="t" style="left:306.68px;top:399.49px;font-size:11px;line-height:14px;color:#8e9297;">12:56</div>
<div class="t" style="left:338.68px;top:399.49px;font-size:11px;line-height:14px;color:#8e9297;">13:01</div>
<div class="t" style="left:377.18px;top:399.49px;font-size:11px;line-height:14px;color:#8e9297;">13:06</div>
<div class="t" style="left:415.59px;top:399.49px;font-size:11px;line-height:14px;color:#8e9297;">13:11</div>
<div class="t" style="left:453.85px;top:399.49px;font-size:11px;line-height:14px;color:#8e9297;">13:16</div>
<div class="t" style="left:492.41px;top:399.49px;font-size:11px;line-height:14px;color:#8e9297;">13:21</div>
<div class="t" style="left:530.62px;top:399.49px;font-size:11px;line-height:14px;color:#8e9297;">13:26</div>
<div class="t" style="left:569.24px;top:399.49px;font-size:11px;line-height:14px;color:#8e9297;">13:31</div>
<div class="t" style="left:607.80px;top:399.49px;font-size:11px;line-height:14px;color:#8e9297;">13:36</div>
<div class="t" style="left:646.15px;top:399.49px;font-size:11px;line-height:14px;color:#8e9297;">13:41</div>
<div class="t" style="left:684.74px;top:399.49px;font-size:11px;line-height:14px;color:#8e9297;">13:46</div>
<div class="t" style="left:723.00px;top:399.49px;font-size:11px;line-height:14px;color:#8e9297;">13:51</div>
<div class="t" style="left:753.73px;top:399.49px;font-size:11px;line-height:14px;color:#8e9297;">13:56</div>
<svg class="b" style="left:885px;top:108px" width="120" height="120" viewBox="885 108 120 120"><circle cx="945" cy="168" r="55.5" fill="none" stroke="#30353a" stroke-width="6.599999999999994"/><path d="M945.74 109.20A58.8 58.8 0 0 1 956.00 110.24L954.76 116.72A52.2 52.2 0 0 0 945.66 115.80Z" fill="#c93dce"/><circle cx="945" cy="168" r="48.5" fill="none" stroke="#30353a" stroke-width="6.400000000000006"/><path d="M945.75 116.31A51.7 51.7 0 0 1 947.50 116.36L947.19 122.75A45.3 45.3 0 0 0 945.65 122.70Z" fill="#4caf50"/><circle cx="945" cy="168" r="41.5" fill="none" stroke="#30353a" stroke-width="6.599999999999994"/><path d="M945.76 123.21A44.8 44.8 0 0 1 946.46 123.22L946.24 129.82A38.2 38.2 0 0 0 945.64 129.81Z" fill="#00a7a0"/></svg>
<svg class="b" style="left:1074px;top:108px" width="120" height="120" viewBox="1074 108 120 120"><circle cx="1134" cy="168" r="55.5" fill="none" stroke="#30353a" stroke-width="6.599999999999994"/><path d="M1134.74 109.20A58.8 58.8 0 1 1 1100.04 216.00L1103.85 210.61A52.2 52.2 0 1 0 1134.66 115.80Z" fill="#c93dce"/><circle cx="1134" cy="168" r="48.5" fill="none" stroke="#30353a" stroke-width="6.400000000000006"/><path d="M1134.75 116.31A51.7 51.7 0 0 1 1144.02 117.28L1142.78 123.56A45.3 45.3 0 0 0 1134.65 122.70Z" fill="#4caf50"/><circle cx="1134" cy="168" r="41.5" fill="none" stroke="#30353a" stroke-width="6.599999999999994"/><path d="M1134.76 123.21A44.8 44.8 0 0 1 1135.46 123.22L1135.24 129.82A38.2 38.2 0 0 0 1134.64 129.81Z" fill="#00a7a0"/></svg>
<svg class="b" style="left:1263px;top:108px" width="120" height="120" viewBox="1263 108 120 120"><circle cx="1323" cy="168" r="55.8" fill="none" stroke="#30353a" stroke-width="6.0"/><path d="M1323.74 109.20A58.8 58.8 0 0 1 1351.13 116.37L1348.26 121.63A52.8 52.8 0 0 0 1323.66 115.20Z" fill="#4caf50"/></svg>
<div class="t" style="left:931.04px;top:72.95px;font-size:14px;line-height:18px;color:#a0a0a0;letter-spacing:-0.587px;">CPU</div>
<div class="t" style="left:1107.42px;top:72.95px;font-size:14px;line-height:18px;color:#a0a0a0;letter-spacing:0.394px;">Memory</div>
<div class="t" style="left:1305.98px;top:72.95px;font-size:14px;line-height:18px;color:#a0a0a0;letter-spacing:0.588px;">Pods</div>
<div class="b" style="left:873px;top:258.2px;width:8px;height:8px;background:#c93dce;border-radius:2px;"></div>
<div class="t" style="left:888.37px;top:253.15px;font-size:14px;line-height:18px;color:#a0a0a0;letter-spacing:-0.136px;">Usage: 0.32</div>
<div class="b" style="left:873px;top:288.7px;width:8px;height:8px;background:#4caf50;border-radius:2px;"></div>
<div class="t" style="left:888.26px;top:283.65px;font-size:14px;line-height:18px;color:#a0a0a0;letter-spacing:-0.077px;">Requests: 0.10</div>
<div class="b" style="left:873px;top:318.8px;width:8px;height:8px;background:#00a7a0;border-radius:2px;"></div>
<div class="t" style="left:888.26px;top:313.75px;font-size:14px;line-height:18px;color:#a0a0a0;letter-spacing:0.141px;">Limits: 0.10</div>
<div class="b" style="left:873px;top:357px;width:8px;height:8px;background:#032b4d;border-radius:2px;"></div>
<div class="t" style="left:889.08px;top:343.95px;font-size:14px;line-height:18px;color:#a0a0a0;letter-spacing:0.137px;">Allocatable</div>
<div class="t" style="left:888.48px;top:359.95px;font-size:14px;line-height:18px;color:#a0a0a0;letter-spacing:-0.026px;">Capacity: 10.00</div>
<div class="b" style="left:873px;top:395.8px;width:8px;height:8px;background:#30353a;border-radius:2px;"></div>
<div class="t" style="left:888.48px;top:390.75px;font-size:14px;line-height:18px;color:#a0a0a0;letter-spacing:-0.026px;">Capacity: 10.00</div>
<div class="b" style="left:1062px;top:258.2px;width:8px;height:8px;background:#c93dce;border-radius:2px;"></div>
<div class="t" style="left:1077.41px;top:253.15px;font-size:14px;line-height:18px;color:#a0a0a0;letter-spacing:-0.233px;">Usage: 4.6GiB</div>
<div class="b" style="left:1062px;top:288.7px;width:8px;height:8px;background:#4caf50;border-radius:2px;"></div>
<div class="t" style="left:1077.20px;top:283.65px;font-size:14px;line-height:18px;color:#a0a0a0;">Requests: 266.0MiB</div>
<div class="b" style="left:1062px;top:318.8px;width:8px;height:8px;background:#00a7a0;border-radius:2px;"></div>
<div class="t" style="left:1077.20px;top:313.75px;font-size:14px;line-height:18px;color:#a0a0a0;letter-spacing:0.186px;">Limits: 50.0MiB</div>
<div class="b" style="left:1062px;top:357px;width:8px;height:8px;background:#032b4d;border-radius:2px;"></div>
<div class="t" style="left:1078.18px;top:343.95px;font-size:14px;line-height:18px;color:#a0a0a0;letter-spacing:0.127px;">Allocatable</div>
<div class="t" style="left:1077.77px;top:359.95px;font-size:14px;line-height:18px;color:#a0a0a0;letter-spacing:-0.145px;">Capacity: 7.7GiB</div>
<div class="b" style="left:1062px;top:395.8px;width:8px;height:8px;background:#30353a;border-radius:2px;"></div>
<div class="t" style="left:1077.77px;top:390.75px;font-size:14px;line-height:18px;color:#a0a0a0;letter-spacing:-0.145px;">Capacity: 7.7GiB</div>
<div class="b" style="left:1273px;top:258.2px;width:8px;height:8px;background:#4caf50;border-radius:2px;"></div>
<div class="t" style="left:1288.66px;top:253.15px;font-size:14px;line-height:18px;color:#a0a0a0;letter-spacing:-0.200px;">Usage: 9</div>
<div class="b" style="left:1273px;top:288.7px;width:8px;height:8px;background:#30353a;border-radius:2px;"></div>
<div class="t" style="left:1288.88px;top:283.65px;font-size:14px;line-height:18px;color:#a0a0a0;letter-spacing:0.041px;">Capacity: 110</div>
<div class="b" style="left:831px;top:584px;width:40px;height:40px;background:#4caf50;border-radius:50%;"></div>
<svg class="b" style="left:835px;top:588px;" width="32" height="32" viewBox="0.0000 0.0000 24.0000 24.0000" fill="#ffffff"><path d="M9 16.17L4.83 12l-1.42 1.41L9 19 21 7l-1.41-1.41z"/></svg>
<div class="t" style="left:784.09px;top:634.86px;font-size:18px;line-height:23px;color:#ffffff;font-weight:bold;letter-spacing:-0.499px;">No issues found</div>
<div class="t" style="left:754.20px;top:667.95px;font-size:14px;line-height:18px;color:#8e9297;letter-spacing:-0.019px;">Everything is fine in the Cluster</div>
<div class="b" style="left:275px;top:837px;width:1151px;height:1px;background:#4c5053;"></div>
<div class="b" style="left:275px;top:838px;width:1151px;height:32px;background:#2e3136;"></div>
<div class="b" style="left:291px;top:838px;width:123px;height:32px;background:#36393e;"></div>
<svg class="b" style="left:299px;top:842px;" width="21" height="22" viewBox="0.0000 -1.0286 24.0000 25.1429" fill="#8e9297"><path d="M20 4H4c-1.11 0-2 .9-2 2v12c0 1.1.89 2 2 2h16c1.1 0 2-.9 2-2V6c0-1.1-.9-2-2-2zm0 14H4V8h16v10zm-2-1h-6v-2h6v2zM7.5 17l-1.41-1.41L8.67 13l-2.59-2.59L7.5 9l4 4-4 4z"/></svg>
<div class="t" style="left:328.39px;top:844.15px;font-size:14px;line-height:18px;color:#8e9297;letter-spacing:0.167px;">Terminal</div>
<svg class="b" style="left:390px;top:845px;" width="17" height="18" viewBox="0.0000 -0.9882 24.0000 25.4118" fill="#8e9297"><path d="M19 6.41L17.59 5 12 10.59 6.41 5 5 6.41 10.59 12 5 17.59 6.41 19 12 13.41 17.59 19 19 17.59 13.41 12z"/></svg>
<svg class="b" style="left:422px;top:844px;" width="21" height="21" viewBox="-0.9600 -0.6000 25.2000 25.2000" fill="#8e9297"><path d="M19 13h-6v6h-2v-6H5v-2h6V5h2v6h6v2z"/></svg>
<svg class="b" style="left:1359px;top:843px;" width="23" height="23" viewBox="-0.6545 -0.5455 25.0909 25.0909" fill="#8e9297"><path d="M7 14H5v5h5v-2H7v-3zm-2-4h2V7h3V5H5v5zm12 7h-3v2h5v-5h-2v3zM14 5v2h3v3h2V5h-5z"/></svg>
<svg class="b" style="left:1389px;top:844px;" width="21" height="21" viewBox="-0.6000 -0.2400 25.2000 25.2000" fill="#8e9297"><path d="M7.41 15.41L12 10.83l4.59 4.58L18 14l-6-6-6 6z"/></svg>
</div>
</body></html>
